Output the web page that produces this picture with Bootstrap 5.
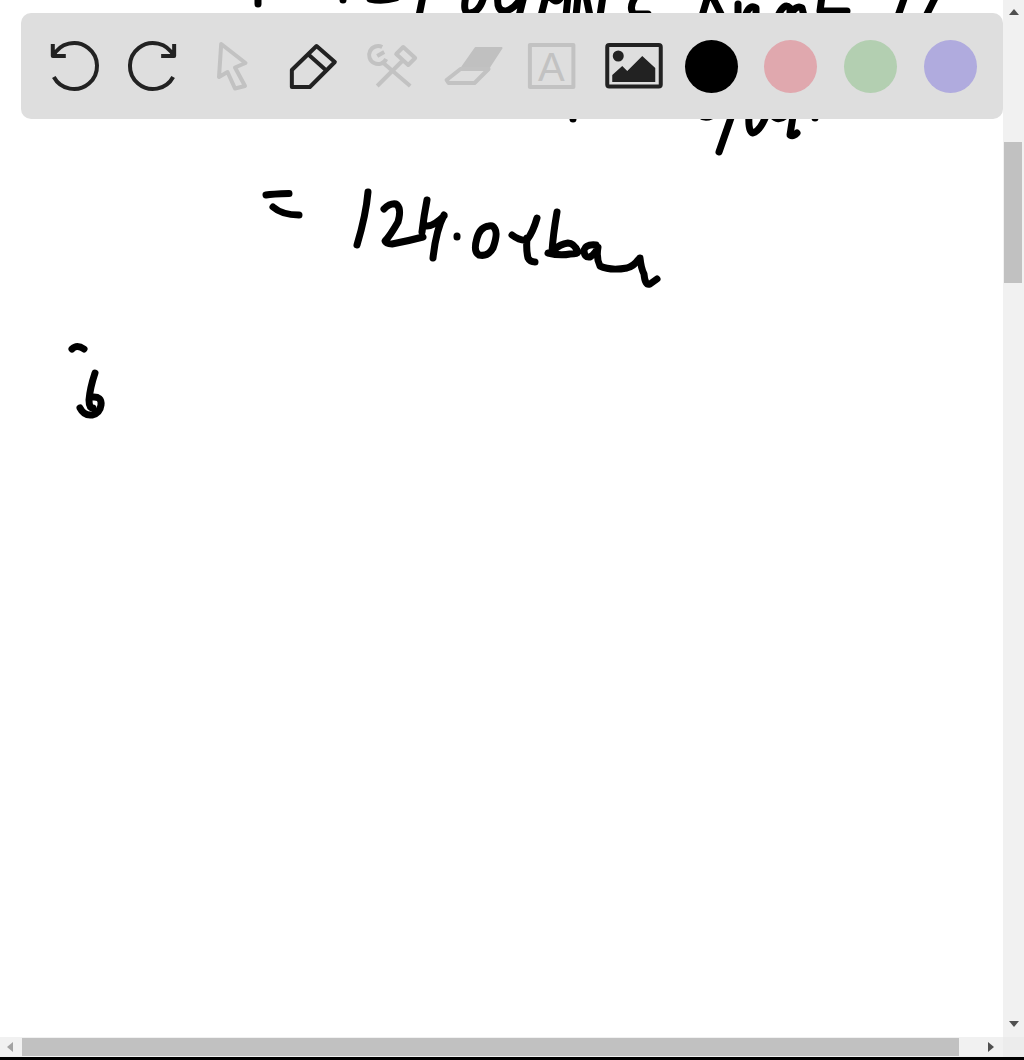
<!DOCTYPE html>
<html lang="en">
<head>
  <meta charset="UTF-8">
  <title>Whiteboard</title>
  <meta name="viewport" content="width=device-width, initial-scale=1.0">
  <link href="https://cdn.jsdelivr.net/npm/bootstrap@5.3.0/dist/css/bootstrap.min.css" rel="stylesheet">
  <style>
    body { background-color: #fff; }
    .board-frame { height: 1057px; }
    .board-canvas { width: 1003px; height: 1037px; }
    .board-ink { fill: none; stroke: #000; stroke-width: 7; stroke-linecap: round; stroke-linejoin: round; }

    /* Toolbar floats over the drawing */
    .board-tools {
      left: 21px;
      top: 13px;
      width: 982px;
      height: 106px;
      padding-left: 13.4px;
      background-color: #dedede;
      border-radius: 10px;
    }
    .tool-btn { width: 79.65px; height: 60px; flex: none; }
    .tool-btn svg { display: block; margin: 0 auto; }
    .tool-dark { fill: none; stroke: #222; stroke-width: 4; stroke-linejoin: round; }
    .tool-off { fill: none; stroke: #c2c2c2; stroke-width: 4; stroke-linejoin: round; }
    .tool-fill { fill: #c0c0c0; stroke: #c0c0c0; stroke-width: 2; stroke-linejoin: round; }
    .tool-letter { fill: #c2c2c2; font-family: "Liberation Sans", sans-serif; font-size: 40px; }
    .swatch { display: block; width: 53px; height: 53px; margin: 0 auto; border-radius: 50%; }
    .swatch-black { background-color: #000; }
    .swatch-pink { background-color: #e0a8ae; }
    .swatch-green { background-color: #b3cfb1; }
    .swatch-purple { background-color: #b0abde; }

    /* Scrollbars */
    .vbar { width: 21px; background-color: #f1f1f1; }
    .vbar-thumb { width: 18px; height: 141px; margin: 127px 0 0 1px; background-color: #c1c1c1; }
    .hbar { height: 20px; background-color: #f1f1f1; }
    .hbar-track { width: 1003px; padding: 1px 0; }
    .hbar-thumb { width: 937px; margin-left: 9px; background-color: #c1c1c1; }
    .hbar-corner { background-color: #ececec; }
    .bar-end { width: 0; height: 0; border-style: solid; border-color: transparent; }
    .end-up { margin: 9px auto 0; border-width: 0 5px 6px; border-bottom-color: #505050; }
    .end-down { margin: 0 auto 10px; border-width: 6px 5px 0; border-top-color: #505050; }
    .end-left { margin: 4px 0 0 7px; border-width: 5px 6px 5px 0; border-right-color: #a3a3a3; }
    .end-right { margin: 4px 0 0 29px; border-width: 5px 0 5px 6px; border-left-color: #505050; }
    .board-edge { height: 3px; background-color: #000; }
  </style>
</head>
<body class="overflow-hidden">
  <div class="board-frame d-flex flex-column">
    <div class="d-flex flex-grow-1">
      <div class="board-canvas position-relative">
        <!-- Ink strokes, same coordinates as the page -->
        <svg class="d-block" width="1003" height="1037" viewBox="0 0 1003 1037">
          <g class="board-ink">
            <!-- top line, cut off by the window and the toolbar -->
            <path d="M258 -4V4"/>
            <path d="M343 -3V0"/>
            <path d="M370 -1Q382 2 396 -2"/>
            <path d="M423 -4L419 16"/>
            <path d="M466 -4Q462 14 470 13Q480 12 484 -4"/>
            <path d="M498 -4Q496 12 506 11Q516 8 522 -4M524 -4L519 16"/>
            <path d="M546 -4L541 16M550 -4Q556 6 562 -4"/>
            <path d="M568 -4L566 16M578 -4L576 16M586 -4L590 16"/>
            <path d="M603 -4L600 16"/>
            <path d="M636 -4Q628 8 634 14H648"/>
            <path d="M702 16L708 -4M712 -4L722 16"/>
            <path d="M738 16V4M746 14Q750 4 756 8L756 16"/>
            <path d="M778 16Q784 2 790 8L790 16Q796 4 802 8L804 16"/>
            <path d="M822 -4L820 11H847"/>
            <path d="M905 -4L898 16"/>
            <path d="M936 -4L926 16"/>
            <!-- line below the toolbar -->
            <path d="M573 118V119"/>
            <path d="M700 115Q705 119 711 116"/>
            <path d="M733 112L719 152"/>
            <path d="M749 116Q748 132 753 133Q760 131 766 116"/>
            <path d="M772 115Q778 122 785 116"/>
            <path d="M793 116L790 135Q793 137 797 133"/>
            <path d="M815 116V118"/>
            <!-- = 124.04 bar -->
            <path d="M266 195Q272 194 289 193.500"/>
            <path d="M273 207Q282 215 299 215"/>
            <path d="M368 192Q366 215 357 245"/>
            <path d="M384 209Q390 203 396 204Q402 208 398 222Q390 236 385 241Q386 244 392 244Q408 241 423 237"/>
            <path d="M427 200Q424 215 422 232M444 215Q436 230 433 258M427 226Q434 226 444 216"/>
            <path d="M457 236V237"/>
            <path d="M489 226Q480 227 477 238Q473 252 479 255Q488 257 493 248Q498 234 495 229Q493 225 489 226Z"/>
            <path d="M512 235Q520 241 527 240Q533 232 537 218M527 238Q526 250 528 258Q530 262 535 262"/>
            <path d="M557 212Q553 235 552 252M548 253Q560 256 570 254Q578 254 578 252Q574 243 568 243Q560 244 554 250"/>
            <path d="M596 245Q586 244 584 250Q584 258 590 257Q596 253 598 247Q596 258 600 266Q610 271 627 268Q634 266 638 260"/>
            <path d="M640 258Q641 268 644 274Q645 286 650 284L657 279"/>
            <!-- b) -->
            <path d="M72 349Q77 344 84 349"/>
            <path d="M95 373Q90 388 89 400Q89 408 93 408"/>
            <path d="M92 397Q102 396 101 405Q100 413 92 415Q84 416 80 408"/>
          </g>
        </svg>

        <!-- Toolbar -->
        <div class="board-tools position-absolute d-flex align-items-center">
          <button type="button" class="btn tool-btn p-0 border-0" aria-label="Undo">
            <svg width="60" height="60" viewBox="44.200 36 60 60"><path class="tool-dark" d="M53 44V56H66M53.500 56A23 23 0 1 1 54 77"/></svg>
          </button>
          <button type="button" class="btn tool-btn p-0 border-0" aria-label="Redo">
            <svg width="60" height="60" viewBox="123.850 36 60 60"><path class="tool-dark" d="M174 44V56H161M173.500 56A23 23 0 1 0 173 77"/></svg>
          </button>
          <button type="button" class="btn tool-btn p-0 border-0" aria-label="Select">
            <svg width="60" height="60" viewBox="203.500 36 60 60"><path class="tool-off" d="M221.700 44L246 63L235.500 67.500L245.500 86L235.500 88.500L228 72L219.500 77Z"/></svg>
          </button>
          <button type="button" class="btn tool-btn p-0 border-0" aria-label="Pen">
            <svg width="60" height="60" viewBox="283.150 36 60 60"><path class="tool-dark" d="M316.700 46L335 62L310 87H292V70ZM308 54L327 71"/></svg>
          </button>
          <button type="button" class="btn tool-btn p-0 border-0" aria-label="Tools">
            <svg width="60" height="60" viewBox="362.800 36 60 60"><path class="tool-off" d="M377 86L403 60M410 86L382 62M382 47A9 9 0 1 0 386 59M384 52L377 56M403 47L415 58L408 65L396 54Z"/></svg>
          </button>
          <button type="button" class="btn tool-btn p-0 border-0" aria-label="Eraser">
            <svg width="60" height="60" viewBox="442.450 36 60 60" class="overflow-visible"><path class="tool-fill" d="M476 48H502L489 68H462Z"/><path class="tool-off" d="M461 69H489L475 83H449L447 80Z"/></svg>
          </button>
          <button type="button" class="btn tool-btn p-0 border-0" aria-label="Text">
            <svg width="60" height="60" viewBox="522.100 36 60 60"><rect class="tool-off" x="530" y="45" width="43.500" height="42"/><text class="tool-letter" x="551.500" y="80.500" text-anchor="middle">A</text></svg>
          </button>
          <button type="button" class="btn tool-btn p-0 border-0" aria-label="Image">
            <svg width="60" height="60" viewBox="601.750 36 60 60" class="overflow-visible"><rect class="tool-dark" x="607" y="45" width="53.500" height="41.500" rx="2"/><circle fill="#222" cx="618" cy="56" r="5.500"/><path fill="#222" d="M612 82V75L622 66L627 71L642 56L655 68V82Z"/></svg>
          </button>
          <button type="button" class="btn tool-btn p-0 border-0" aria-label="Black"><span class="swatch swatch-black"></span></button>
          <button type="button" class="btn tool-btn p-0 border-0" aria-label="Pink"><span class="swatch swatch-pink"></span></button>
          <button type="button" class="btn tool-btn p-0 border-0" aria-label="Green"><span class="swatch swatch-green"></span></button>
          <button type="button" class="btn tool-btn p-0 border-0" aria-label="Purple"><span class="swatch swatch-purple"></span></button>
        </div>
      </div>

      <!-- Vertical scrollbar -->
      <div class="vbar d-flex flex-column">
        <div class="bar-end end-up"></div>
        <div class="vbar-thumb"></div>
        <div class="bar-end end-down mt-auto"></div>
      </div>
    </div>

    <!-- Horizontal scrollbar -->
    <div class="hbar d-flex">
      <div class="hbar-track d-flex">
        <div class="bar-end end-left"></div>
        <div class="hbar-thumb"></div>
        <div class="bar-end end-right"></div>
      </div>
      <div class="hbar-corner flex-grow-1"></div>
    </div>
  </div>
  <div class="board-edge"></div>

  <script src="https://cdn.jsdelivr.net/npm/bootstrap@5.3.0/dist/js/bootstrap.bundle.min.js"></script>
</body>
</html>
